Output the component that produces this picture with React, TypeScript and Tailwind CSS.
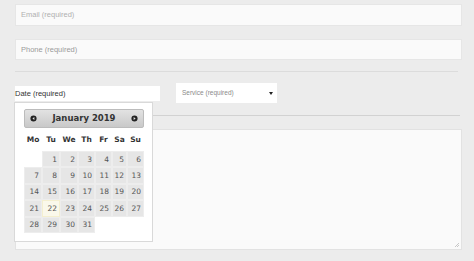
import React from "react";

const weeks: (number | null)[][] = [
  [null, 1, 2, 3, 4, 5, 6],
  [7, 8, 9, 10, 11, 12, 13],
  [14, 15, 16, 17, 18, 19, 20],
  [21, 22, 23, 24, 25, 26, 27],
  [28, 29, 30, 31, null, null, null],
];

const dayNames = ["Mo", "Tu", "We", "Th", "Fr", "Sa", "Su"];

function NavIcon({ dir }: { dir: "prev" | "next" }) {
  return (
    <svg width="7" height="7" viewBox="0 0 16 16">
      <circle cx="8" cy="8" r="7" fill="#222" />
      {dir === "prev" ? (
        <path d="M10 4.5 L5.5 8 L10 11.5 Z" fill="#e0e0e0" />
      ) : (
        <path d="M6 4.5 L10.5 8 L6 11.5 Z" fill="#e0e0e0" />
      )}
    </svg>
  );
}

function Datepicker() {
  return (
    <div className="absolute left-[-1px] top-[16px] w-[139px] h-[140px] bg-white border border-[#d9d9d9] px-[9px] pt-[6px] font-['DejaVu_Sans',sans-serif] z-10">
      <div className="h-[19px] w-[120px] flex items-center justify-between px-[5px] rounded-[2px] border border-[#bcbcbc] bg-gradient-to-b from-[#e2e2e2] to-[#c9c9c9]">
        <NavIcon dir="prev" />
        <span className="text-[8.5px] font-bold text-[#333]">January 2019</span>
        <NavIcon dir="next" />
      </div>
      <div className="grid grid-cols-[18px_18px_18px_17px_17px_15px_17px] w-[120px] h-[23px] items-center">
        {dayNames.map((d) => (
          <span key={d} className="text-center text-[7.5px] font-bold text-[#333]">
            {d}
          </span>
        ))}
      </div>
      <div className="grid grid-cols-[18px_18px_18px_17px_17px_15px_17px] grid-rows-[16.4px_16.4px_16.4px_16.4px_16.4px] w-[120px]">
        {weeks.flat().map((n, i) =>
          n === null ? (
            <span key={i} />
          ) : (
            <span
              key={i}
              className={
                "flex items-center justify-end pr-[2px] text-[7.5px] text-[#555] border border-[#ededed] " +
                (n === 22 ? "bg-[#faf8ea] border-[#f4efcf]" : "bg-[#e6e6e6]")
              }
            >
              {n}
            </span>
          )
        )}
      </div>
    </div>
  );
}

export default function App() {
  return (
    <div className="w-[474px] h-[261px] bg-[#ececec] overflow-hidden font-['Liberation_Sans',Arial,sans-serif]">
      <div className="pl-[15px] pt-[4px] w-[462px] flex flex-col">
        <div className="h-[22px] bg-[#fafafa] border border-[#e6e6e6] px-[5px] flex items-center text-[7.5px] text-[#b0b0b0]">
          Email (required)
        </div>
        <div className="mt-[13px] h-[21px] bg-[#fafafa] border border-[#e6e6e6] px-[5px] flex items-center text-[7.5px] text-[#9a9a9a]">
          Phone (required)
        </div>
        <div className="mt-[11px] mr-[4px] h-px bg-[#dcdcdc]" />
        <div className="mt-[11px] flex items-start">
          <div className="relative mt-[3px] w-[145px] h-[15px] bg-white flex items-center text-[7.5px] text-[#333]">
            Date (required)
            <Datepicker />
          </div>
          <div className="ml-[16px] w-[101px] h-[20px] bg-white flex items-center justify-between pl-[6px] pr-[4px] text-[6.5px] text-[#8a8a8a]">
            <span>Service (required)</span>
            <svg width="4" height="3" viewBox="0 0 4 3">
              <path d="M0 0 H4 L2 3 Z" fill="#222" />
            </svg>
          </div>
        </div>
        <div className="mt-[12px] mr-[2px] h-px bg-[#d2d2d2]" />
        <div className="relative mt-[13px] h-[121px] bg-[#fafafa] border border-[#e2e2e2]">
          <svg className="absolute right-[1px] bottom-[1px]" width="6" height="6" viewBox="0 0 6 6">
            <path d="M5 1 L1 5 M5 3 L3 5" stroke="#bbb" strokeWidth="0.8" />
          </svg>
        </div>
      </div>
    </div>
  );
}
